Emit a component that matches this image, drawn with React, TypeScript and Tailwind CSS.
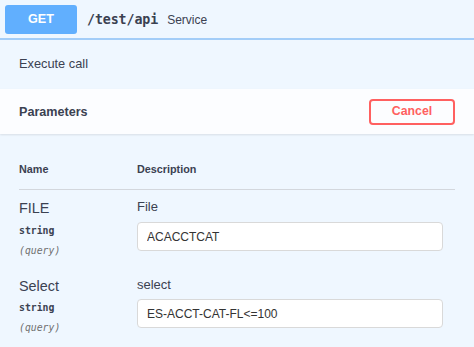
const SANS = { fontFamily: '"Liberation Sans", Arial, sans-serif' }

const PARAMS = [
  { name: 'FILE', type: 'string', location: 'query', description: 'File', value: 'ACACCTCAT' },
  { name: 'Select', type: 'string', location: 'query', description: 'select', value: 'ES-ACCT-CAT-FL<=100' },
]

export default function App() {
  return (
    <div
      className="w-[474px] h-[347px] overflow-hidden bg-[#eff7ff] text-[#3b4151] font-['Liberation_Sans',Arial,sans-serif]"
      style={SANS}
    >
      {/* Summary */}
      <div className="flex items-start h-[38px] pl-[5px] pt-[5px]">
        <div className="w-[72px] h-[29px] rounded-[3px] bg-[#61affe] text-white font-bold text-[12.6px] flex items-center justify-center">
          GET
        </div>
        <span className="ml-[10px] h-[29px] flex items-center font-['DejaVu_Sans_Mono',monospace] font-bold text-[13.3px] tracking-[-0.1px]">
          /test/api
        </span>
        <span className="ml-[9px] h-[29px] flex items-center text-[12px]">Service</span>
      </div>
      <div className="h-[2px] bg-[#a3cdf8]" />

      {/* Description */}
      <div className="h-[49px] pt-[16px] pl-[19px] text-[12.8px] leading-[15px]">Execute call</div>

      {/* Parameters header */}
      <div className="h-[45px] bg-[#fcfdff] shadow-[0_1px_2px_rgba(0,0,0,0.1)] flex items-center justify-between px-[19px] relative">
        <h4 className="font-bold text-[12.6px] pt-[2px]">Parameters</h4>
        <button className="w-[86px] h-[26px] rounded-[4px] border-2 border-[#ff6060] text-[#ff6060] font-bold text-[12.3px] bg-transparent">
          Cancel
        </button>
      </div>

      {/* Table */}
      <div className="mx-[19px] pt-[28px]">
        <div className="flex font-bold text-[10.8px] leading-[15px] pb-[12px] border-b border-[#d3d7dd]">
          <div className="w-[118px]">Name</div>
          <div>Description</div>
        </div>

        {PARAMS.map((p, i) => (
          <div key={p.name} className={`flex ${i === 0 ? 'pt-[9px]' : 'pt-[20px]'}`}>
            <div className="w-[118px]">
              <div className="text-[14.4px] leading-[18px]">{p.name}</div>
              <div className={`${i === 0 ? 'mt-[7px]' : 'mt-[6px]'} font-['DejaVu_Sans_Mono',monospace] font-bold text-[9.8px] leading-[13px]`}>
                {p.type}
              </div>
              <div className="mt-[7px] font-['DejaVu_Sans_Mono',monospace] italic text-[9.8px] leading-[13px] text-[#707070]">
                ({p.location})
              </div>
            </div>
            <div className="flex-1 pr-[12px]">
              <div className="text-[13px] leading-[16px]">{p.description}</div>
              <input
                readOnly
                value={p.value}
                className={`${i === 0 ? 'mt-[7px]' : 'mt-[6px]'} w-full h-[29px] rounded-[4px] border border-[#d9d9d9] bg-white pl-[9px] text-[12px] text-[#333] outline-none`}
                style={SANS}
              />
            </div>
          </div>
        ))}
      </div>
    </div>
  )
}
